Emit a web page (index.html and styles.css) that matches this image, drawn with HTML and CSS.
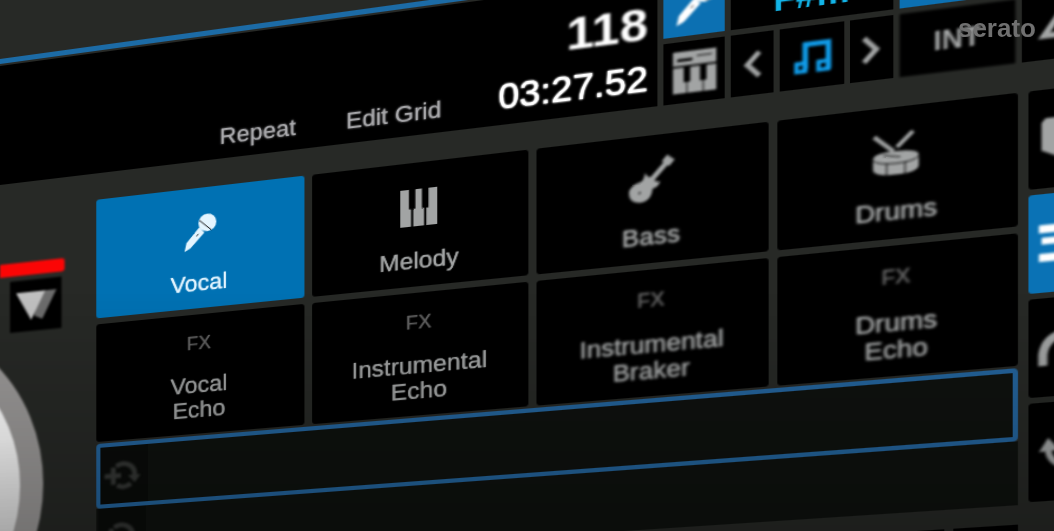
FILE: index.html
```html
<!DOCTYPE html>
<html lang="en">
<head>
  <meta charset="UTF-8" />
  <meta name="viewport" content="width=device-width, initial-scale=1.0" />
  <title>Serato Deck</title>
  <link rel="stylesheet" href="styles.css">
</head>
<body>
  <svg class="sprite" aria-hidden="true">
    <symbol id="mic" viewBox="0 0 34 38">
      <circle cx="25" cy="10" r="9"/>
      <path d="M17 14 22 20 8 35 2 38 4 29Z"/>
      <path class="cut" d="M17 7 29 18M14 23l2-2"/>
    </symbol>
    <symbol id="loop" viewBox="0 0 38 34">
      <path class="line" d="M13 8a12 12 0 0 1 19 10M14 28a12 12 0 0 0 14-1"/>
      <path class="line" d="M1 18h17M10 9v18"/>
      <path d="M25 18h13l-6 8z"/>
    </symbol>
  </svg>

  <main class="stage">
    <div class="plane">
      <header class="deck-header">
        <div class="track-info">
          <span class="label">Repeat</span>
          <span class="label">Edit Grid</span>
          <div class="readout">
            <span class="bpm">118</span>
            <span class="time">03:27.52</span>
          </div>
        </div>
        <button class="ctl on" aria-label="Vocal stem"><svg class="ico-mic"><use href="#mic"/></svg></button>
        <div class="ctl key">F#m</div>
        <div class="ctl on sync"></div>
        <button class="ctl" aria-label="Keyboard">
          <svg class="ico-keyboard" viewBox="0 0 40 42">
            <path d="M0 0h40v42H0z"/>
            <path class="hole" d="M4 7h14v3H4zM22 5h14v1H22zM0 14h40v2H0zM10 16h6v15h-6zM25 16h6v15h-6z"/>
            <path class="cut" d="M13 31v11M28 31v11"/>
          </svg>
        </button>
        <button class="ctl" aria-label="Key down"><svg class="ico-arrow" viewBox="0 0 18 30"><path class="line" d="M15 3 4 15l11 12"/></svg></button>
        <button class="ctl" aria-label="Key shift"><svg class="ico-note" viewBox="0 0 36 36">
          <path class="line" d="M12 30V5h21v27"/>
          <path class="line thin" d="M4 24h8v8H4z"/>
          <path class="line thin" d="M24 24h9v8h-9z"/>
        </svg></button>
        <button class="ctl" aria-label="Key up"><svg class="ico-arrow" viewBox="0 0 18 30"><path class="line" d="M2 3l11 12L2 27"/></svg></button>
        <button class="ctl int">INT</button>
        <button class="ctl last" aria-label="Deck mode"><svg class="ico-wedge" viewBox="0 0 30 26"><path class="line" d="M15 2 3 20h24"/></svg></button>
      </header>

      <div class="deck-body">
        <aside class="left">
          <div class="playhead"></div>
          <button class="marker" aria-label="Marker">
            <svg viewBox="0 0 40 28"><path class="back" d="M22 0h18L26 28 18 24z"/><path d="M0 0h29L15 28z"/></svg>
          </button>
          <div class="platter"></div>
        </aside>

        <section class="center">
          <div class="pads">
            <button class="pad stem on">
              <svg class="ico-mic"><use href="#mic"/></svg>
              <span>Vocal</span>
            </button>
            <button class="pad stem">
              <svg class="ico-keys" viewBox="0 0 34 36">
                <path d="M0 0h34v36H0z"/>
                <path class="hole" d="M8 0h6v19H8zM20 0h6v19h-6zM10 19h2v17h-2zM22 19h2v17h-2z"/>
              </svg>
              <span>Melody</span>
            </button>
            <button class="pad stem far">
              <svg class="ico-bass" viewBox="0 0 42 46">
                <path class="line" d="M20 25 36 7"/>
                <path class="line head" d="M34 9l5-6"/>
                <path d="M15 16q2 5 7 6l2 3q3 2 5 1-1 6-7 7-1 13-12 13Q0 45 0 35q1-8 11-10 3-1 4-9z"/>
                <circle class="hole" cx="10" cy="36" r="1"/>
              </svg>
              <span>Bass</span>
            </button>
            <button class="pad stem far">
              <svg class="ico-drum" viewBox="0 0 42 42">
                <path class="line" d="M2 2 19 18M36 0 22 14"/>
                <path d="M1 24q0-6 20-6t20 6v10q0 7-20 7T1 34z"/>
                <path class="cut" d="M1 25q4 5 20 5t20-5M13 29v12M29 29v12M10 21l15 3"/>
              </svg>
              <span>Drums</span>
            </button>
            <button class="pad fx"><small>FX</small><span>Vocal<br>Echo</span></button>
            <button class="pad fx"><small>FX</small><span>Instrumental<br>Echo</span></button>
            <button class="pad fx far"><small>FX</small><span>Instrumental<br>Braker</span></button>
            <button class="pad fx far"><small>FX</small><span>Drums<br>Echo</span></button>
          </div>
          <div class="slot selected"><div class="slot-icon"><svg><use href="#loop"/></svg></div></div>
          <div class="slot"><div class="slot-icon"><svg><use href="#loop"/></svg></div></div>
          <div class="lower"><div></div><div></div></div>
        </section>

        <nav class="modes">
          <button class="mode" aria-label="Cues"><svg viewBox="0 0 40 40"><path d="M5 2h35v38H22L2 30V6z"/></svg></button>
          <button class="mode on" aria-label="Stems"><svg viewBox="0 0 40 40"><path d="M0 4h40v7H0zM2 15h38v6H2zM14 20h26v8H14zM0 29h40v7H0z"/></svg></button>
          <button class="mode" aria-label="Gauge"><svg viewBox="0 0 40 40"><path class="line heavy" d="M3 36V26Q5 10 22 8"/><path d="M14 36l8-9v9z"/></svg></button>
          <button class="mode" aria-label="Loops"><svg viewBox="0 0 40 40"><path class="line" d="M7 18q1 14 18 16"/><path d="M0 20 7 8l9 11zM12 7l20-5v11z"/></svg></button>
        </nav>
      </div>
    </div>
    <div class="shade"></div>
    <div class="watermark">serato</div>
  </main>
</body>
</html>
```

FILE: styles.css
```css
* {
  box-sizing: border-box;
}

body {
  margin: 0;
  background: #272926;
  font-family: "Liberation Sans", Arial, sans-serif;
  color: #a2a4a4;
}

button {
  font: inherit;
  color: inherit;
  border: 0;
  padding: 0;
}

svg {
  fill: currentColor;
  overflow: visible;
}

.sprite {
  position: absolute;
  width: 0;
  height: 0;
}

.line {
  fill: none;
  stroke: currentColor;
  stroke-width: 5;
}

.line.thin { stroke-width: 4; }
.line.heavy { stroke-width: 7; }
.hole { fill: #000; }
.cut { fill: none; stroke: #000; stroke-width: 1; }

.stage {
  position: relative;
  height: 100vh;
  overflow: hidden;
}

/* the whole deck is one flat panel seen from the left */
.plane {
  width: 91vw;
  padding-top: 59px;
  transform-origin: 0 0;
  transform: matrix3d(1, -0.1457, 0, -0.00014, 0, 1, 0, 0, 0, 0, 1, 0, 0, 0, 0, 1);
}

/* header */
.deck-header {
  display: grid;
  grid-template-columns: 1fr 51px 35px 52px 34px 90px 65px;
  grid-template-rows: 58px 56px;
  gap: 5px;
  border-top: 5px solid #1c6ba6;
  padding-top: 2px;
}

.track-info {
  grid-row: span 2;
  display: flex;
  justify-content: flex-end;
  align-items: flex-end;
  gap: 46px;
  padding: 0 8px 4px 0;
  background: #000;
  font-size: 22px;
}

.label {
  margin-bottom: 2px;
  line-height: 30px;
  color: #a8a8ab;
  text-shadow: 0 0 2px currentColor;
}

.readout {
  display: flex;
  flex-direction: column;
  align-items: flex-end;
  gap: 2px;
  margin-left: 4px;
  color: #fff;
}

.bpm {
  font-size: 43px;
  line-height: 54px;
  font-weight: bold;
  filter: blur(1px);
}

.time {
  font-size: 33px;
  line-height: 44px;
  text-shadow: 0 0 2px #fff, 0 0 2px #fff;
}

.ctl {
  display: flex;
  align-items: center;
  justify-content: center;
  background: #000;
}

.ctl svg, .int { filter: blur(1px); }
.ctl.on { background: #0c70b2; color: #fff; }
.ctl .ico-mic { width: 34px; height: 38px; }
.key {
  grid-column: span 3;
  align-items: flex-end;
  padding-bottom: 5px;
  font-size: 30px;
  font-weight: bold;
  color: #12b4e8;
}
.sync { grid-column: span 2; }
.ico-keyboard { width: 36px; height: 40px; }
.ico-arrow { width: 16px; height: 27px; }
.ico-note { width: 32px; height: 32px; color: #109be8; }
.int { font-size: 23px; font-weight: bold; }
.last { justify-content: flex-start; padding-left: 14px; }
.ico-wedge { width: 30px; height: 26px; }

/* body */
.deck-body {
  display: grid;
  grid-template-columns: 95px 1fr 60px;
  column-gap: 8px;
  padding-top: 26px;
}

.left {
  margin-right: -8px;
}

.playhead {
  width: 64px;
  height: 13px;
  margin-top: 54px;
  background: #fb0505;
  border-radius: 0 3px 3px 0;
  filter: blur(1px);
}

.marker {
  display: grid;
  place-items: center;
  width: 51px;
  height: 51px;
  margin: 5px 0 0 10px;
  background: #000;
  filter: blur(1px);
}

.marker svg { width: 40px; height: 28px; color: #c0c0c0; }
.marker .back { fill: #6c6c6c; }

.platter {
  width: 366px;
  height: 366px;
  margin: -30px 0 0 -323px;
  border: 23px solid #9c9a99;
  border-radius: 50%;
  background: linear-gradient(#fff 35%, #d0d0d0 80%);
  filter: blur(1px);
}

.center {
  margin-left: -8px;
}

.pads {
  display: grid;
  grid-template-columns: 197fr 193fr 195fr 190fr;
  grid-template-rows: 117px 116px;
  gap: 6px 7px;
}

.pad {
  display: flex;
  flex-direction: column;
  align-items: center;
  background: #000;
  border-radius: 3px;
  font-size: 22px;
  line-height: 24px;
}

.pad span, .pad small { text-shadow: 0 0 1px currentColor; }

.stem {
  justify-content: flex-end;
  gap: 20px;
  padding-bottom: 12px;
}

.fx {
  justify-content: space-between;
  padding: 16px 0 11px;
}

.fx small {
  font-size: 18px;
  color: #606060;
}

.pad.on { background: #0071b3; color: #e4f5ff; }
.far svg, .far span, .far small {
  filter: blur(1px);
}
.far span, .far small { text-shadow: 0 0 2px currentColor; }

.pad .ico-mic { width: 32px; height: 36px; }
.ico-keys { width: 33px; height: 37px; }
.ico-bass { width: 38px; height: 42px; }
.ico-drum { width: 38px; height: 38px; }
.ico-drum .line { stroke-width: 4; }
.ico-bass .head { stroke-width: 9; }

.slot {
  height: 56px;
  padding-left: 2px;
  background: #0f120f;
}

.slot.selected {
  height: 64px;
  margin-top: 2px;
  padding-left: 0;
  border: 4px solid #24649c;
  border-radius: 4px;
}

.slot-icon {
  display: grid;
  place-items: center;
  width: 46px;
  height: 100%;
  padding-right: 4px;
  background: #0a0c0a;
  color: #363836;
}

.slot-icon svg { width: 36px; height: 32px; filter: blur(1px); }

.lower {
  display: grid;
  grid-template-columns: 1fr 50px;
  gap: 7px;
  height: 40px;
  margin-top: 17px;
}

.lower div { background: #000; }

.modes {
  display: grid;
  grid-auto-rows: 86px;
  align-content: start;
  gap: 5px;
}

.mode {
  display: flex;
  align-items: center;
  padding-left: 8px;
  background: #000;
  border-radius: 3px;
}

.mode svg { width: 40px; height: 40px; filter: blur(1px); }
.mode.on { background: #0a72b5; color: #fff; }

.shade {
  position: absolute;
  inset: 0;
  background: linear-gradient(transparent 55%, rgba(0, 0, 0, .25));
  pointer-events: none;
}

.watermark {
  position: absolute;
  top: 14px;
  right: 18px;
  font-size: 26px;
  line-height: 28px;
  font-weight: bold;
  color: #707070;
}
```
